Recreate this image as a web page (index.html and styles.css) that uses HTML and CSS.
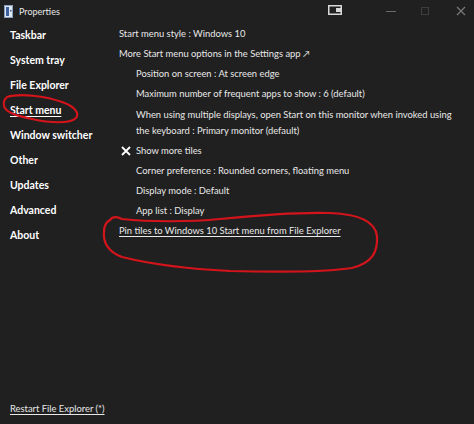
FILE: index.html
```html
<!DOCTYPE html>
<html>
<head>
<meta charset="utf-8">
<link rel="stylesheet" href="styles.css">
</head>
<body>
<div class="window">
  <div class="titlebar">
    <svg class="appicon" width="9" height="13" viewBox="0 0 9 13">
      <rect x="0.5" y="0.5" width="8" height="12" fill="#dfe6f0" stroke="#8aa0c0"/>
      <rect x="2" y="2" width="3" height="9" fill="#3b5f9a"/>
      <rect x="6" y="5" width="1.5" height="1.5" fill="#3b5f9a"/>
    </svg>
    <span class="title">Properties</span>
    <div class="spacer"></div>
    <svg class="tb-icon wallet" width="14" height="10" viewBox="0 0 14 10">
      <rect x="0.75" y="0.75" width="12.5" height="8.5" fill="none" stroke="#d8d8d8" stroke-width="1.5"/>
      <rect x="8" y="3" width="5" height="4" fill="#d8d8d8"/>
    </svg>
    <svg class="tb-icon min" width="10" height="10" viewBox="0 0 10 10">
      <line x1="0" y1="5.5" x2="10" y2="5.5" stroke="#6a6a6a" stroke-width="1"/>
    </svg>
    <svg class="tb-icon max" width="10" height="10" viewBox="0 0 10 10">
      <rect x="1.5" y="1.5" width="7" height="7" fill="none" stroke="#3e3e3e" stroke-width="1"/>
    </svg>
    <svg class="tb-icon close" width="10" height="10" viewBox="0 0 10 10">
      <path d="M1 1 L9 9 M9 1 L1 9" stroke="#7a7a7a" stroke-width="1.2"/>
    </svg>
  </div>
  <div class="main">
    <nav class="sidebar">
      <div class="nav-item">Taskbar</div>
      <div class="nav-item">System tray</div>
      <div class="nav-item">File Explorer</div>
      <div class="nav-item active">Start menu</div>
      <div class="nav-item">Window switcher</div>
      <div class="nav-item">Other</div>
      <div class="nav-item">Updates</div>
      <div class="nav-item">Advanced</div>
      <div class="nav-item">About</div>
    </nav>
    <section class="content">
      <div class="row">Start menu style : Windows 10</div>
      <div class="row">More Start menu options in the Settings app <span class="arrow">&#x2197;</span></div>
      <div class="row sub">Position on screen : At screen edge</div>
      <div class="row sub">Maximum number of frequent apps to show : 6 (default)</div>
      <div class="row sub">When using multiple displays, open Start on this monitor when invoked using the keyboard : Primary monitor (default)</div>
      <div class="row check">
        <svg class="xmark" width="10" height="10" viewBox="0 0 10 10">
          <path d="M1 1 L9 9 M9 1 L1 9" stroke="#ffffff" stroke-width="1.8"/>
        </svg>
        <span>Show more tiles</span>
      </div>
      <div class="row sub">Corner preference : Rounded corners, floating menu</div>
      <div class="row sub">Display mode : Default</div>
      <div class="row sub">App list : Display</div>
      <div class="row link">Pin tiles to Windows 10 Start menu from File Explorer</div>
    </section>
  </div>
  <div class="footer"><span class="link">Restart File Explorer (*)</span></div>
  <svg class="scribble" width="474" height="424" viewBox="0 0 474 424">
    <path d="M7 97 C 20 93, 45 96, 62 102 C 74 106, 80 113, 76 118 C 70 124, 50 123, 32 119 C 18 116, 6 113, 4 106 C 3 101, 5 97, 10 96" fill="none" stroke="#d4141b" stroke-width="2.2" stroke-linecap="round"/>
    <path d="M110 220 C 113 216, 118 217, 122 219 C 150 222, 190 222, 220 219 C 260 215, 300 212, 330 213 C 357 214, 375 220, 377 236 C 378 252, 372 263, 352 268 C 320 273, 270 272, 230 271 C 190 269, 150 264, 122 257 C 108 252, 103 242, 104 232 C 104 226, 106 222, 110 220" fill="none" stroke="#d4141b" stroke-width="2.2" stroke-linecap="round"/>
  </svg>
</div>
</body>
</html>
```

FILE: styles.css
```css
html, body {
  margin: 0;
  padding: 0;
  background: #202020;
}
.window {
  position: relative;
  width: 474px;
  height: 424px;
  display: flex;
  flex-direction: column;
  background: #202020;
  font-family: "Lato", "Noto Sans", sans-serif;
  color: #e4e4e4;
  overflow: hidden;
}
.titlebar {
  height: 22px;
  display: flex;
  align-items: center;
  padding-left: 4px;
}
.appicon {
  margin-right: 6px;
}
.title {
  font-size: 9px;
  color: #e8e8e8;
}
.spacer {
  flex: 1;
}
.tb-icon {
  display: block;
}
.wallet {
  margin-right: 44px;
  margin-top: -2px;
}
.min {
  margin-right: 24px;
}
.max {
  margin-right: 26px;
}
.close {
  margin-right: 8px;
}
.main {
  flex: 1;
  display: flex;
}
.sidebar {
  width: 119px;
  flex-shrink: 0;
  padding-top: 1px;
  display: flex;
  flex-direction: column;
}
.nav-item {
  height: 25px;
  line-height: 25px;
  padding-left: 10px;
  font-size: 10.5px;
  font-weight: 700;
  color: #ffffff;
  white-space: nowrap;
}
.nav-item.active {
  text-decoration: underline;
  text-underline-offset: 2px;
}
.content {
  flex: 1;
  padding-top: 4px;
  display: flex;
  flex-direction: column;
  gap: 4.15px;
  padding-right: 10px;
}
.row {
  font-size: 9.4px;
  line-height: 16px;
  color: #e8e8e8;
}
.row.sub {
  padding-left: 17px;
}
.arrow {
  font-size: 9px;
}
.row.check {
  display: flex;
  align-items: center;
  padding-left: 2px;
}
.xmark {
  margin-right: 5px;
}
.link {
  text-decoration: underline;
  text-underline-offset: 2px;
}
.footer {
  height: 23px;
  padding-left: 10px;
  font-size: 9.4px;
  line-height: 16px;
  color: #e8e8e8;
}
.scribble {
  position: absolute;
  left: 0;
  top: 0;
  pointer-events: none;
}
```
